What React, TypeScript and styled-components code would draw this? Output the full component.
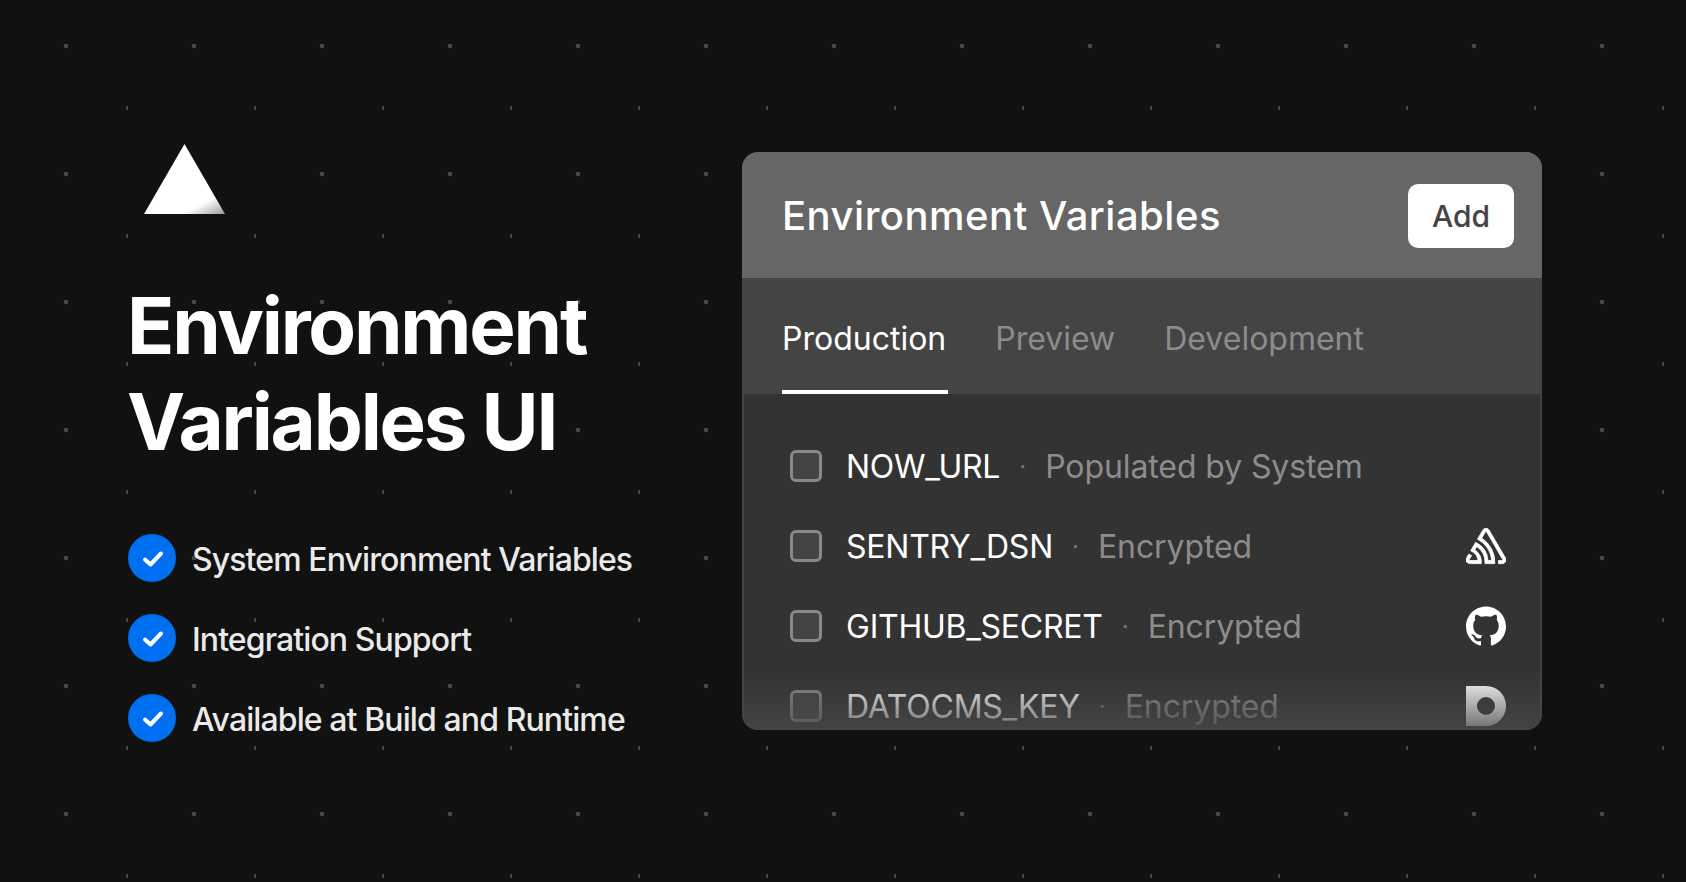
import React, {FC} from 'react'
import styled, {createGlobalStyle} from 'styled-components'
import {SiSentry, SiGithub} from 'react-icons/si'

const GlobalStyle = createGlobalStyle`
  html, body {
    margin: 0;
    padding: 0;
    background: #111;
  }
  * {
    box-sizing: border-box;
  }
`

const Page = styled.div`
  width: 1686px;
  height: 882px;
  overflow: hidden;
  display: flex;
  align-items: flex-start;
  padding: 144px 0 0 128px;
  font-family: Inter, "Liberation Sans", sans-serif;
  background-color: #111;
  background-image:
    radial-gradient(circle at 66px 46px, #484848 0, #484848 2px, transparent 2.6px),
    radial-gradient(circle at 128px 108px, #484848 0, #484848 2px, transparent 2.6px);
  background-size: 128px 128px;
`

const Intro = styled.div`
  width: 614px;
  flex-shrink: 0;
`

const Logo = styled.svg`
  display: block;
  width: 81px;
  height: 70px;
  margin-left: 16px;
  margin-bottom: 64px;
`

const Title = styled.h1`
  margin: 0 0 64px -1px;
  font-size: 78px;
  line-height: 96px;
  font-weight: 700;
  letter-spacing: -2.2px;
  color: #fff;
`

const Features = styled.ul`
  list-style: none;
  margin: 0;
  padding: 0;
  display: flex;
  flex-direction: column;
  gap: 32px;
`

const Feature = styled.li`
  display: flex;
  align-items: center;
  gap: 16px;
  height: 48px;
  font-size: 32px;
  font-weight: 500;
  letter-spacing: -0.9px;
  color: #eaeaea;
`

const FeatureLabel = styled.span`
  margin-top: 2px;
`

const CheckCircle = styled.span`
  width: 48px;
  height: 48px;
  padding: 1px 0 0 2px;
  border-radius: 50%;
  background: #0070f3;
  display: flex;
  align-items: center;
  justify-content: center;
  flex-shrink: 0;
`

const Card = styled.section`
  width: 800px;
  height: 578px;
  margin-top: 8px;
  flex-shrink: 0;
  border-radius: 16px;
  overflow: hidden;
  position: relative;
  display: flex;
  flex-direction: column;
  background: #444;
`

const CardHeader = styled.header`
  height: 126px;
  flex-shrink: 0;
  background: #666;
  display: flex;
  align-items: center;
  justify-content: space-between;
  padding: 2px 28px 0 40px;
`

const CardTitle = styled.h2`
  margin: 0 0 2px;
  font-size: 40px;
  font-weight: 500;
  letter-spacing: 0.5px;
  color: #fff;
`

const AddButton = styled.button`
  width: 106px;
  height: 64px;
  border: 0;
  border-radius: 10px;
  background: #fff;
  color: #444;
  font-family: inherit;
  font-size: 30px;
  font-weight: 500;
`

const Tabs = styled.nav`
  height: 116px;
  flex-shrink: 0;
  display: flex;
  align-items: stretch;
  gap: 47px;
  padding: 0 40px;
  background: #444;
`

const Tab = styled.span<{ $active?: boolean }>`
  display: flex;
  align-items: center;
  padding: 5px 2px 0 0;
  font-size: 32px;
  color: ${p => (p.$active ? '#fff' : '#8c8c8c')};
  border-bottom: 4px solid ${p => (p.$active ? '#fff' : 'transparent')};
  border-top: 4px solid transparent;
`

const Body = styled.div`
  flex: 1;
  min-height: 0;
  overflow: hidden;
  margin: 0 2px;
  padding-top: 32px;
  background: #333;
`

const Row = styled.div`
  height: 80px;
  display: flex;
  align-items: center;
  padding: 0 34px 0 46px;
  font-size: 32px;
`

const Checkbox = styled.span`
  width: 32px;
  height: 32px;
  flex-shrink: 0;
  margin-right: 24px;
  border: 3px solid #888;
  border-radius: 6px;
  background: #444;
`

const VarName = styled.span`
  color: #fff;
  letter-spacing: -0.25px;
`

const Sep = styled.span`
  width: 45px;
  text-align: center;
  color: #777;
  font-size: 24px;
`

const Note = styled.span`
  color: #8c8c8c;
  letter-spacing: -0.1px;
`

const RowIcon = styled.span`
  margin-left: auto;
  width: 40px;
  height: 40px;
  color: #fff;
  display: flex;
  align-items: center;
  justify-content: center;
`

const BottomFade = styled.div`
  position: absolute;
  left: 0;
  right: 0;
  bottom: 0;
  height: 57px;
  background: linear-gradient(to bottom, rgba(72, 72, 72, 0), rgba(72, 72, 72, 0.8));
  pointer-events: none;
`

const Check: FC = () => (
  <svg width="22" height="18" viewBox="0 0 22 18" fill="none">
    <path d="M3 9.5l5.5 5L19 3.5" stroke="#fff" strokeWidth="4" strokeLinecap="round" strokeLinejoin="round"/>
  </svg>
)

const DatoIcon: FC = () => (
  <svg width="40" height="40" viewBox="0 0 40 40" fill="#fff">
    <path fillRule="evenodd" d="M0 0h20a20 20 0 0 1 0 40H0zM20 11a9 9 0 1 0 0 18a9 9 0 0 0 0-18z"/>
  </svg>
)

type Variable = {
  name: string
  note: string
  icon?: React.ReactNode
}

const variables: Variable[] = [
  {name: 'NOW_URL', note: 'Populated by System'},
  {name: 'SENTRY_DSN', note: 'Encrypted', icon: <SiSentry size={40} stroke="currentColor" strokeWidth={0.5}/>},
  {name: 'GITHUB_SECRET', note: 'Encrypted', icon: <SiGithub size={40}/>},
  {name: 'DATOCMS_KEY', note: 'Encrypted', icon: <DatoIcon/>},
]

const features = ['System Environment Variables', 'Integration Support', 'Available at Build and Runtime']

const App: FC = () => {
  return (
    <Page>
      <GlobalStyle/>
      <Intro>
        <Logo viewBox="0 0 81 70">
          <defs>
            <linearGradient id="logoShade" x1="54.5" y1="61.5" x2="63.5" y2="79" gradientUnits="userSpaceOnUse">
              <stop offset="0" stopColor="#fff"/>
              <stop offset="1" stopColor="#999"/>
            </linearGradient>
          </defs>
          <path d="M40.5 0L81 70H0z" fill="url(#logoShade)"/>
        </Logo>
        <Title>Environment<br/>Variables UI</Title>
        <Features>
          {features.map(f => (
            <Feature key={f}>
              <CheckCircle><Check/></CheckCircle>
              <FeatureLabel>{f}</FeatureLabel>
            </Feature>
          ))}
        </Features>
      </Intro>
      <Card>
        <CardHeader>
          <CardTitle>Environment Variables</CardTitle>
          <AddButton>Add</AddButton>
        </CardHeader>
        <Tabs>
          <Tab $active>Production</Tab>
          <Tab>Preview</Tab>
          <Tab>Development</Tab>
        </Tabs>
        <Body>
          {variables.map(v => (
            <Row key={v.name}>
              <Checkbox/>
              <VarName>{v.name}</VarName>
              <Sep>·</Sep>
              <Note>{v.note}</Note>
              {v.icon && <RowIcon>{v.icon}</RowIcon>}
            </Row>
          ))}
        </Body>
        <BottomFade/>
      </Card>
    </Page>
  )
}

export default App
